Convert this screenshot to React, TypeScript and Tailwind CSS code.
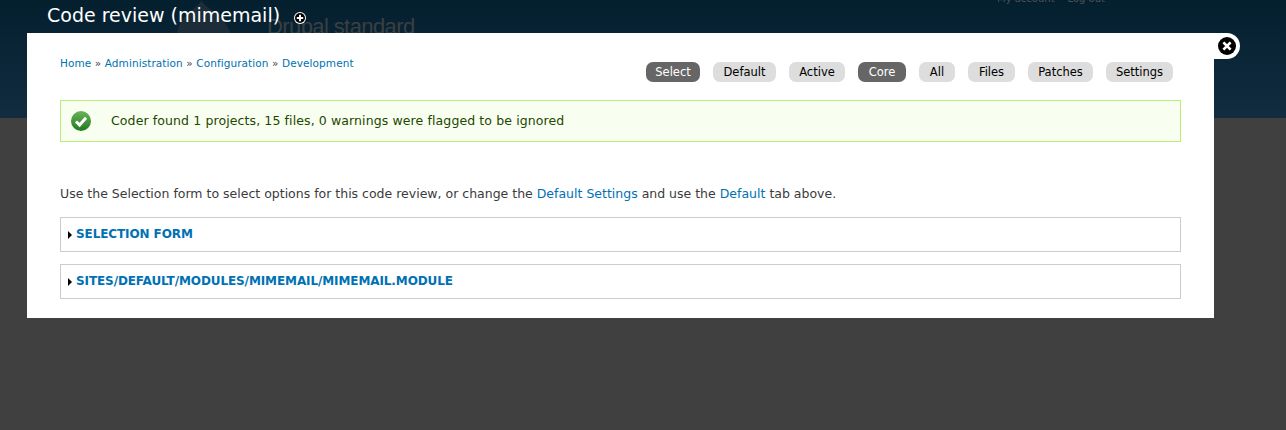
import React from "react";

const font = { fontFamily: '"DejaVu Sans", sans-serif' };

function Tab({ label, active, w }: { label: string; active?: boolean; w: string }) {
  return (
    <a className={"h-5 pt-[2px] rounded-[7px] flex items-center justify-center text-[11.5px] " + w + " " + (active ? "bg-[#666666] text-white" : "bg-[#dddddd] text-black")}>
      {label}
    </a>
  );
}

function Fieldset({ label }: { label: string }) {
  return (
    <div className="h-[35px] border border-[#cccccc] flex items-center pl-[7px] gap-[4px] pb-[2px]">
      <svg width="4" height="8" viewBox="0 0 4 8" className="mt-[3px]"><path d="M0 0 L4 4 L0 8 Z" fill="#000" /></svg>
      <span className="text-[12px] font-bold text-[#0071b3] tracking-[-0.1px] uppercase">{label}</span>
    </div>
  );
}

export default function App() {
  return (
    <div className="relative w-[1286px] h-[430px] overflow-hidden bg-[#404040]" style={font}>
      <div className="relative h-[118px] bg-gradient-to-b from-[#04202f] to-[#122c40]">
        <span className="absolute left-[267px] top-[10px] text-[22px] text-[#3a3f42] tracking-[-0.6px]" style={{ fontFamily: '"Liberation Sans", sans-serif' }}>Drupal standard</span>
        <svg className="absolute left-[175px] top-0" width="58" height="34" viewBox="0 0 58 34"><path d="M26 0 C24 8 4 14 2 34 L56 34 C50 16 30 8 26 0 Z" fill="#1c2c38" /></svg>
        <div className="absolute left-[997px] top-[-9px] flex gap-[13px] text-[10px] text-[#4a5258]"><span>My account</span><span>Log out</span></div>
        <div className="absolute left-[47px] top-[2px] flex items-center gap-[14px]">
          <span className="text-[19px] leading-[27px] text-white">Code review (mimemail)</span>
          <svg width="12" height="12" viewBox="0 0 12 12" className="mt-[4px]">
            <circle cx="6" cy="6" r="6" fill="#fff" />
            <circle cx="6" cy="6" r="5" fill="#000" />
            <path d="M6 2.8V9.2M2.8 6H9.2" stroke="#fff" strokeWidth="2" />
          </svg>
        </div>
      </div>

      <div className="absolute left-[27px] top-[33px] w-[1187px] h-[285px] bg-white px-[33px]">
        <div className="h-[67px] flex justify-between">
          <div className="pt-[22px] text-[10.5px] leading-[16px] text-[#444444] tracking-[0.09px]">
            <a className="text-[#0071b3]">Home</a> » <a className="text-[#0071b3]">Administration</a> » <a className="text-[#0071b3]">Configuration</a> » <a className="text-[#0071b3]">Development</a>
          </div>
          <div className="flex gap-[13px] pt-[29px] pr-[8px] h-[49px]">
            <Tab label="Select" active w="w-[54px]" />
            <Tab label="Default" w="w-[63px]" />
            <Tab label="Active" w="w-[56px]" />
            <Tab label="Core" active w="w-[48px]" />
            <Tab label="All" w="w-[36px]" />
            <Tab label="Files" w="w-[47px]" />
            <Tab label="Patches" w="w-[65px]" />
            <Tab label="Settings" w="w-[67px]" />
          </div>
        </div>
        <div className="h-[42px] border border-[#bbee77] bg-[#f8fff0] flex items-center pl-[10px] gap-[20px]">
          <svg width="20" height="20" viewBox="0 0 20 20">
            <defs>
              <linearGradient id="g" x1="0" y1="0" x2="0" y2="1">
                <stop offset="0" stopColor="#6cb35a" />
                <stop offset="1" stopColor="#1f7a1f" />
              </linearGradient>
            </defs>
            <circle cx="10" cy="10" r="10" fill="url(#g)" />
            <path d="M5 10.5 L8.6 14 L15 6.8" fill="none" stroke="#fff" strokeWidth="3" />
          </svg>
          <span className="text-[12.5px] tracking-[0.11px] text-[#234600]">Coder found 1 projects, 15 files, 0 warnings were flagged to be ignored</span>
        </div>
        <p className="mt-[43px] text-[12.5px] leading-[18px] text-[#3b3b3b]">
          Use the Selection form to select options for this code review, or change the <a className="text-[#0071b3]">Default Settings</a> and use the <a className="text-[#0071b3]">Default</a> tab above.
        </p>
        <div className="mt-[14px] flex flex-col gap-[12px]">
          <Fieldset label="Selection form" />
          <Fieldset label="sites/default/modules/mimemail/mimemail.module" />
        </div>
        <div className="absolute right-[-26px] top-0 w-[26px] h-[26px] bg-white rounded-r-[13px] flex items-center">
          <svg width="18" height="18" viewBox="0 0 20 20" className="ml-[4px]">
            <circle cx="10" cy="10" r="10" fill="#000" />
            <path d="M6 6 L14 14 M14 6 L6 14" stroke="#fff" strokeWidth="3" />
          </svg>
        </div>
      </div>
    </div>
  );
}
